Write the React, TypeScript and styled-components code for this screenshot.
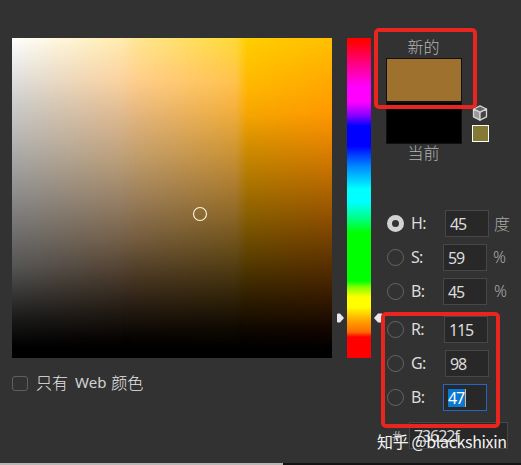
import React from "react";
import styled, { createGlobalStyle, css } from "styled-components";

const GlobalStyle = createGlobalStyle`
  *, *::before, *::after { box-sizing: border-box; }
  body { margin: 0; background: #323232; overflow: hidden; }
`;

const Dialog = styled.main`
  position: relative;
  display: flex;
  flex-direction: column;
  width: 521px;
  height: 465px;
  padding-top: 38px;
  overflow: hidden;
  background: #323232;
  color: #dcdcdc;
  font-family: "Noto Sans", "Noto Sans CJK SC", sans-serif;
  font-size: 15px;
`;

const Columns = styled.div`
  display: flex;
  height: 425px;
  padding-left: 12px;
`;

const PickerColumn = styled.section`
  width: 320px;
`;

const Field = styled.div`
  position: relative;
  width: 320px;
  height: 320px;
  overflow: hidden;
  background: #000;
`;

/* Each layer is a vertical brightness ramp, faded in horizontally. */
const Ramp = styled.div<{ $left: number; $width: number; $fade: number; $stops: string }>`
  position: absolute;
  top: 0;
  bottom: 0;
  left: ${(p) => p.$left}px;
  width: ${(p) => p.$width}px;
  background: linear-gradient(to bottom, ${(p) => p.$stops});
  ${(p) =>
    p.$fade > 0 &&
    css`
      mask-image: linear-gradient(to right, transparent 0, #000 ${p.$fade}px);
    `}
`;

const Marker = styled.svg`
  position: absolute;
  left: 180px;
  top: 168px;
`;

const WebOnly = styled.label`
  display: flex;
  align-items: center;
  height: 24px;
  margin-top: 12px;
  white-space: pre;
  font-family: "Noto Sans CJK SC", sans-serif;
  font-size: 16px;
  font-weight: 300;
  color: #e6e6e6;
`;

const Latin = styled.span`
  margin: 0 5px 0 7px;
  font-family: "Noto Sans", sans-serif;
  font-size: 15px;
  font-weight: 400;
  color: #d2d2d2;
`;

const CheckBox = styled.span`
  width: 16px;
  height: 15px;
  margin: 3px 8px 0 0;
  border: 1px solid #5f5f5f;
  border-radius: 3px;
`;

const HueColumn = styled.section`
  display: flex;
  width: 54px;
  height: 320px;
  padding-left: 5px;
`;

const HueStrip = styled.div`
  width: 24px;
  margin: 0 3px;
  background: linear-gradient(
    to bottom,
    #f00 0, #f00 3px, #ff0080 25px, #f0f 49px, #f0f 64px, #8000ff 78px,
    #00f 88px, #00f 108px, #0080ff 127px, #0ff 151px, #0ff 164px,
    #00ff80 181px, #0f0 195px, #0f0 243px, #80ff00 249px, #ff0 259px,
    #ff0 269px, #ffa800 282px, #ff6a00 294px, #f00 299px, #f00 320px
  );
`;

const Arrow = styled.svg`
  margin-top: 275px;
  flex: none;
`;

const ValuesColumn = styled.section`
  display: flex;
  flex-direction: column;
`;

const Preview = styled.div`
  display: flex;
  height: 128px;
`;

const Compare = styled.div`
  width: 76px;
  height: 128px;
  display: flex;
  flex-direction: column;
  color: #b4b4b4;
  font-weight: 300;
  text-align: center;
`;

const Caption = styled.span`
  height: 20px;
  padding-right: 1px;
  line-height: 16px;
  font-size: 16px;
  font-family: "Noto Sans CJK SC", sans-serif;
`;

const Swatch = styled.span<{ $color: string; $height: number }>`
  height: ${(p) => p.$height}px;
  background: ${(p) => p.$color};
  border: 1px solid #111;
`;

const Warnings = styled.div`
  padding: 67px 0 0 8px;
  display: flex;
  flex-direction: column;
  gap: 4px;
  align-items: center;
`;

const WebSafe = styled.span`
  width: 17px;
  height: 17px;
  margin-left: 2px;
  background: #847a35;
  border: 1px solid #fff;
`;

const Row = styled.label<{ $top: number }>`
  display: flex;
  align-items: center;
  height: 27px;
  margin-top: ${(p) => p.$top}px;
`;

const Radio = styled.span<{ $on?: boolean }>`
  width: 17px;
  height: 17px;
  margin: 0 0 1px 1px;
  border-radius: 50%;
  border: ${(p) => (p.$on ? "5px solid #d2d2d2" : "1px solid #666")};
`;

const Name = styled.span<{ $width: number }>`
  width: ${(p) => p.$width}px;
  padding: 0 0 2px 7px;
  font-size: 16px;
  letter-spacing: -0.7px;
`;

const Value = styled.span<{ $focus?: boolean; $width?: number }>`
  width: ${(p) => p.$width ?? 44}px;
  height: 27px;
  padding: 1px 0 0 4px;
  line-height: 25px;
  font-size: 16px;
  letter-spacing: -1.1px;
  background: #282828;
  border: 1px solid ${(p) => (p.$focus ? "#2765c5" : "#474747")};
`;

const Selected = styled.span`
  display: inline-block;
  height: 18px;
  padding-right: 1px;
  line-height: 18px;
  background: #0878d4;
  color: #fff;
  border-right: 1px solid #e2b27b;
`;

const Unit = styled.span<{ $gap: number }>`
  padding: 0 0 2px ${(p) => p.$gap}px;
  color: #aaa;
  font-size: 16px;
  font-weight: 300;
`;

const HexRow = styled.div`
  display: flex;
  align-items: center;
  margin-top: 11px;
  height: 27px;
`;

const Hash = styled.span`
  width: 23px;
  padding-left: 6px;
  font-size: 14px;
  color: #aaa;
`;

const Frame = styled.div<{ $x: number; $y: number; $w: number; $h: number }>`
  position: absolute;
  left: ${(p) => p.$x}px;
  top: ${(p) => p.$y}px;
  width: ${(p) => p.$w}px;
  height: ${(p) => p.$h}px;
  border: 4px solid #e8251e;
  border-radius: 5px;
`;

const Watermark = styled.div`
  position: absolute;
  left: 377px;
  top: 430px;
  line-height: 22px;
  color: #f4f4f4;
  font-family: "Noto Sans CJK SC", sans-serif;
  font-size: 16px;
  letter-spacing: -0.35px;
  white-space: pre;
`;

const Footer = styled.div`
  height: 2px;
  background: linear-gradient(to right, #b8b6b5 283px, #151314 283px);
`;

const ramps = [
  { left: 0, width: 244, fade: 0, stops: "#fff 0, #d0d1d0 60px, #b5b5b4 102px, #8a8a8a 160px, #555 229px, #1c1c1c 279px, #000 310px" },
  { left: 0, width: 244, fade: 125, stops: "#ffe9a2 0, #ffd096 42px, #dfb586 80px, #bf9e73 120px, #9b8060 160px, #765f45 200px, #483726 240px, #261c13 270px, #070402 300px, #000 312px" },
  { left: 110, width: 134, fade: 126, stops: "#ffd72a 0, #ffbf44 45px, #f4ae34 72px, #da9b2e 100px, #b4802a 140px, #8a6421 180px, #5c4412 220px, #302206 260px, #100a01 290px, #000 312px" },
  { left: 224, width: 96, fade: 12, stops: "#ffd000 0, #ffb800 50px, #f4a600 78px, #d99400 100px, #b07a00 140px, #865e00 180px, #5a4000 220px, #2e1e00 260px, #0b0600 295px, #000 312px" },
  { left: 228, width: 92, fade: 92, stops: "#ffc000 0, #ffaa00 40px, #ff9800 75px, #e98700 100px, #bd6c00 140px, #8f5000 180px, #603400 220px, #351a00 260px, #120500 293px, #000 312px" },
];

const channels = [
  { name: "H:", value: "45", unit: "度", on: true, top: 44, label: 41, gap: 5 },
  { name: "S:", value: "59", unit: "%", top: 7, label: 39, gap: 6 },
  { name: "B:", value: "45", unit: "%", top: 7, label: 39, gap: 7 },
  { name: "R:", value: "115", top: 11, label: 40 },
  { name: "G:", value: "98", top: 7, label: 41 },
  { name: "B:", value: "47", focus: true, top: 7, label: 39 },
];

function CubeIcon() {
  return (
    <svg width="16" height="16" viewBox="0 0 16 16" stroke="#d4d4d4" strokeWidth="1.3" strokeLinejoin="round">
      <path d="M8 .9 14.5 4 8 7.3 1.5 4Z" fill="#666" />
      <path d="M1.5 4 8 7.3V15.2L1.5 11.9Z" fill="#999" />
      <path d="M14.5 4 8 7.3V15.2L14.5 11.9Z" fill="#444" />
    </svg>
  );
}

export default function App() {
  return (
    <Dialog>
      <GlobalStyle />
      <Columns>
        <PickerColumn>
          <Field>
            {ramps.map((r, i) => (
              <Ramp key={i} $left={r.left} $width={r.width} $fade={r.fade} $stops={r.stops} />
            ))}
            <Marker width="16" height="16" viewBox="0 0 16 16">
              <circle cx="8" cy="8" r="6.5" fill="none" stroke="#fff8d8" strokeWidth="1.1" />
            </Marker>
          </Field>
          <WebOnly>
            <CheckBox />
            只有<Latin>Web</Latin>颜色
          </WebOnly>
        </PickerColumn>
        <HueColumn>
          <Arrow width="7" height="10" viewBox="0 0 7 10">
            <path d="M0 1.5Q0 .5 1 .5H3L7 5 3 9.5H1Q0 9.5 0 8.5Z" fill="#ebe9ec" />
          </Arrow>
          <HueStrip />
          <Arrow width="8" height="10" viewBox="0 0 8 10">
            <path d="M0 5 4 .5H8V9.5H4Z" fill="#ebe9ec" />
          </Arrow>
        </HueColumn>
        <ValuesColumn>
          <Preview>
            <Compare>
              <Caption>新的</Caption>
              <Swatch $color="#9e722e" $height={44} />
              <Swatch $color="#000" $height={42} />
              <Caption>当前</Caption>
            </Compare>
            <Warnings>
              <CubeIcon />
              <WebSafe />
            </Warnings>
          </Preview>
          {channels.map((c, i) => (
            <Row key={i} $top={c.top}>
              <Radio $on={c.on} />
              <Name $width={c.label}>{c.name}</Name>
              <Value $focus={c.focus}>{c.focus ? <Selected>{c.value}</Selected> : c.value}</Value>
              {c.unit && <Unit $gap={c.gap ?? 6}>{c.unit}</Unit>}
            </Row>
          ))}
          <HexRow>
            <Hash>#</Hash>
            <Value $width={99}>73622f</Value>
          </HexRow>
        </ValuesColumn>
      </Columns>
      <Footer />
      <Frame $x={374} $y={28} $w={103} $h={81} />
      <Frame $x={381} $y={312} $w={119} $h={116} />
      <Watermark>知乎 @blackshixin</Watermark>
    </Dialog>
  );
}
